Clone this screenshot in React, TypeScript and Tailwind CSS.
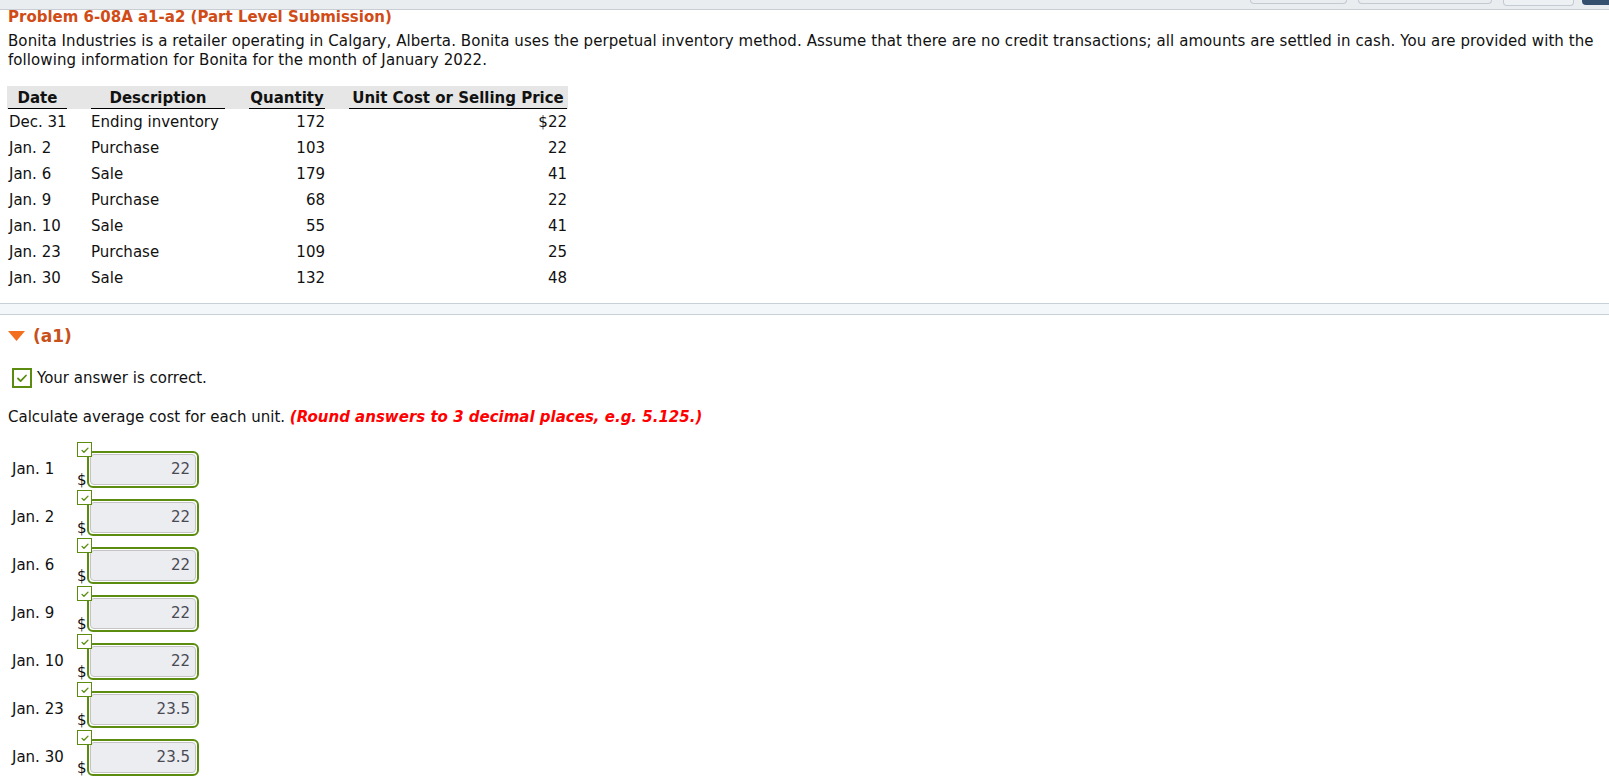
import React from "react";

const rows = [
  ["Dec. 31", "Ending inventory", "172", "$22"],
  ["Jan. 2", "Purchase", "103", "22"],
  ["Jan. 6", "Sale", "179", "41"],
  ["Jan. 9", "Purchase", "68", "22"],
  ["Jan. 10", "Sale", "55", "41"],
  ["Jan. 23", "Purchase", "109", "25"],
  ["Jan. 30", "Sale", "132", "48"],
];

const answers = [
  ["Jan. 1", "22"],
  ["Jan. 2", "22"],
  ["Jan. 6", "22"],
  ["Jan. 9", "22"],
  ["Jan. 10", "22"],
  ["Jan. 23", "23.5"],
  ["Jan. 30", "23.5"],
];

function Check({ size }: { size: number }) {
  return (
    <svg width={size} height={size} viewBox="0 0 16 16" fill="none">
      <path d="M4 8.5l2.6 2.6L12 5.5" stroke="#5b8c10" strokeWidth="1.8" strokeLinecap="round" strokeLinejoin="round" />
    </svg>
  );
}

export default function App() {
  return (
    <div className="min-h-screen bg-white font-['Verdana','DejaVu_Sans',sans-serif] text-[15px] text-[#111]">
      {/* top toolbar strip, cut off */}
      <div className="flex h-[10px] items-start justify-end gap-[11px] overflow-hidden border-b border-[#c8ced4] bg-[#e9edf0]">
        <div className="h-[4px] w-[97px] rounded-b-[4px] border-x border-b border-[#c3cad1]" />
        <div className="h-[4px] w-[134px] rounded-b-[4px] border-x border-b border-[#c3cad1]" />
        <div className="h-[6px] w-[71px] rounded-b-[4px] border-x border-b border-[#c3cad1] bg-[#eef1f4]" />
        <div className="-ml-[3px] h-[5px] w-[27px] rounded-bl-[4px] bg-[#34506e]" />
      </div>

      <div className="px-2">
        <h1 className="mt-[-1px] text-[15px] font-bold leading-[16px] text-[#d14b16]">
          Problem 6-08A a1-a2 (Part Level Submission)
        </h1>
        <p className="mt-[7px] leading-[18.5px] tracking-[0.08px]">
          Bonita Industries is a retailer operating in Calgary, Alberta. Bonita uses the perpetual inventory method. Assume that there are no credit transactions; all amounts are settled in cash. You are provided with the following information for Bonita for the month of January 2022.
        </p>

        <div className="mt-[17px] w-[560px]">
          <div className="-ml-px grid h-[23px] grid-cols-[59px_134px_76px_218px] items-end gap-x-[24px] bg-[#e6e6e6] pl-px font-bold">
            <div className="border-b border-black text-center leading-[19px]">Date</div>
            <div className="border-b border-black text-center leading-[19px]">Description</div>
            <div className="border-b border-black text-center leading-[19px]">Quantity</div>
            <div className="border-b border-black text-center leading-[19px]">Unit Cost or Selling Price</div>
          </div>
          {rows.map(([d, desc, q, c]) => (
            <div key={d} className="grid h-[26px] grid-cols-[59px_134px_76px_218px] items-center gap-x-[24px]">
              <div className="pl-px">{d}</div>
              <div>{desc}</div>
              <div className="text-right">{q}</div>
              <div className="text-right">{c}</div>
            </div>
          ))}
        </div>
      </div>

      <div className="mt-[12px] h-[12px] border-y border-[#c8d0d8] bg-[#f3f7fa]" />

      <div className="px-2">
        <div className="mt-[11px] flex items-center gap-[8px]">
          <svg width="17" height="10" viewBox="0 0 17 10">
            <path d="M0 0h17L8.5 10z" fill="#f36f1d" />
          </svg>
          <span className="text-[17px] font-bold leading-[20px] text-[#c8501a]">(a1)</span>
        </div>

        <div className="mt-[22px] flex items-center gap-[5px] pl-[4px]">
          <span className="flex h-[20px] w-[20px] items-center justify-center border-2 border-[#5b8c10] bg-white">
            <Check size={16} />
          </span>
          <span className="leading-[18px]">Your answer is correct.</span>
        </div>

        <p className="mt-[20px] leading-[18px]">
          Calculate average cost for each unit.{" "}
          <span className="font-bold italic text-[#ff0000]">(Round answers to 3 decimal places, e.g. 5.125.)</span>
        </p>

        <div className="mt-[16px] pl-[4px]">
          {answers.map(([d, v]) => (
            <div key={d} className="flex h-[48px] items-end pb-[2px]">
              <div className="flex h-[37px] w-[65px] items-center">{d}</div>
              <div className="relative flex items-end pt-[9px]">
                <span className="absolute left-0 top-0 z-10 flex h-[15px] w-[15px] items-center justify-center border border-[#5b8c10] bg-white">
                  <Check size={12} />
                </span>
                <span className="w-[10px] leading-[15px]">$</span>
                <div className="h-[37px] w-[112px] rounded-[6px] border-[2.5px] border-[#5b8c10] bg-white p-px">
                  <div className="flex h-full items-center justify-end rounded-[4px] border border-[#c4c4c4] bg-[#ebedf0] pr-[5px] text-[#4a4a55]">
                    {v}
                  </div>
                </div>
              </div>
            </div>
          ))}
        </div>
      </div>
    </div>
  );
}
